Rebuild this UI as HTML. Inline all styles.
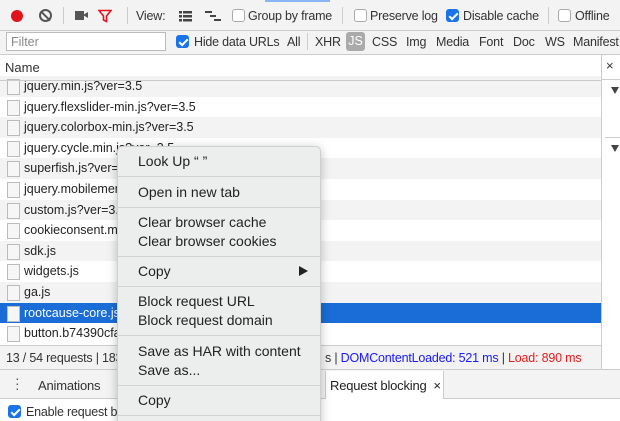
<!DOCTYPE html>
<html style="overflow:hidden;width:620px;height:421px"><head><style>
*{box-sizing:border-box;margin:0;padding:0}
body{width:620px;height:421px;overflow:hidden;background:#fff;font-family:"Liberation Sans",sans-serif;font-size:12.5px;color:#333;position:relative}
.abs{position:absolute;white-space:nowrap}
.cb{position:absolute;width:13px;height:13px;border:1px solid #aaa;border-radius:3px;background:#fff}
.cb.on{background:#1a73e8;border-color:#1a73e8}
.cb.on:after{content:"";position:absolute;left:3.5px;top:0.5px;width:3px;height:7px;border:solid #fff;border-width:0 2px 2px 0;transform:rotate(45deg)}
.t{font-size:12.5px;letter-spacing:-0.2px}
.row{position:absolute;left:0;width:601px;height:20.6px;line-height:20.6px;padding-left:24px;font-size:12.5px;color:#222;overflow:hidden;white-space:nowrap}
.row:before{content:"";position:absolute;left:7px;top:3px;width:11px;height:14px;border:1px solid #bbb;background:#f6f6f6}
.g{background:#f3f3f3}
.menu{position:absolute;left:117px;top:146px;width:204px;height:290px;background:#ebeeec;border:1px solid #cfcfcf;border-radius:5px;box-shadow:0 2px 10px rgba(0,0,0,.25);font-size:14px;color:#222}
.mi{position:absolute;left:20px;white-space:nowrap}
.sep{position:absolute;left:0;right:0;height:1px;background:#d2d2d2}
</style></head><body>
<!-- toolbar -->
<div class="abs" style="left:0;top:0;width:620px;height:31px;background:#f3f3f3;border-bottom:1px solid #ccc"></div>
<div class="abs" style="left:265px;top:0;width:65px;height:2px;background:#8ab4f8"></div>
<div class="abs" style="left:11px;top:10px;width:12px;height:12px;border-radius:50%;background:#e0151b"></div>
<div class="abs" style="left:39px;top:9px;width:13px;height:13px;border-radius:50%;border:2px solid #555"></div>
<div class="abs" style="left:39px;top:15px;width:13px;height:2px;background:#555;transform:rotate(45deg)"></div>
<div class="abs" style="left:63px;top:7px;width:1px;height:17px;background:#ccc"></div>
<div class="abs" style="left:75px;top:11px;width:9px;height:9px;background:#555"></div>
<div class="abs" style="left:83px;top:12px;border-right:5px solid #555;border-top:3.5px solid transparent;border-bottom:3.5px solid transparent"></div>
<svg class="abs" style="left:98px;top:9px" width="14" height="14"><path d="M1 1.5H13L8.5 7V12.5L5.5 11V7Z" fill="none" stroke="#e0151b" stroke-width="1.6"/></svg>
<div class="abs" style="left:127px;top:7px;width:1px;height:17px;background:#ccc"></div>
<div class="abs t" style="left:136px;top:9px">View:</div>
<svg class="abs" style="left:179px;top:11px" width="13" height="11"><rect x="0" y="0" width="3" height="2.5" fill="#444"/><rect x="4" y="0" width="9" height="2.5" fill="#444"/><rect x="0" y="4" width="3" height="2.5" fill="#444"/><rect x="4" y="4" width="9" height="2.5" fill="#444"/><rect x="0" y="8" width="3" height="2.5" fill="#444"/><rect x="4" y="8" width="9" height="2.5" fill="#444"/></svg>
<svg class="abs" style="left:205px;top:11px" width="16" height="11"><rect x="0" y="0" width="7" height="2" fill="#444"/><rect x="5" y="4" width="6" height="2" fill="#444"/><rect x="9" y="8" width="7" height="2" fill="#444"/></svg>
<div class="cb" style="left:232px;top:9px"></div>
<div class="abs t" style="left:248px;top:9px">Group by frame</div>
<div class="abs" style="left:342px;top:7px;width:1px;height:17px;background:#ccc"></div>
<div class="cb" style="left:354px;top:9px"></div>
<div class="abs t" style="left:370px;top:9px">Preserve log</div>
<div class="cb on" style="left:446px;top:9px"></div>
<div class="abs t" style="left:463px;top:9px">Disable cache</div>
<div class="abs" style="left:548px;top:7px;width:1px;height:17px;background:#ccc"></div>
<div class="cb" style="left:558px;top:9px"></div>
<div class="abs t" style="left:575px;top:9px">Offline</div>
<!-- filter row -->
<div class="abs" style="left:0;top:31px;width:620px;height:24px;background:#f3f3f3;border-bottom:1px solid #ccc"></div>
<div class="abs" style="left:6px;top:32px;width:160px;height:19px;background:#fff;border:1px solid #bbb;font-size:12.5px;color:#888;padding:2px 4px">Filter</div>
<div class="cb on" style="left:176px;top:35px"></div>
<div class="abs t" style="left:194px;top:35px">Hide data URLs</div>
<div class="abs t" style="left:287px;top:35px">All</div>
<div class="abs" style="left:307px;top:33px;width:1px;height:17px;background:#ccc"></div>
<div class="abs t" style="left:315px;top:35px">XHR</div>
<div class="abs" style="left:346px;top:32px;width:19px;height:19px;background:#aaa;border-radius:3px;color:#fff;text-align:center;line-height:19px;font-size:12.5px">JS</div>
<div class="abs t" style="left:372px;top:35px">CSS</div>
<div class="abs t" style="left:406px;top:35px">Img</div>
<div class="abs t" style="left:436px;top:35px">Media</div>
<div class="abs t" style="left:479px;top:35px">Font</div>
<div class="abs t" style="left:513px;top:35px">Doc</div>
<div class="abs t" style="left:545px;top:35px">WS</div>
<div class="abs t" style="left:573px;top:35px">Manifest</div>
<!-- header -->
<div class="abs" style="left:0;top:55px;width:620px;height:25px;border-bottom:1px solid #ccc;background:#fff"></div>
<div class="abs" style="left:5px;top:60px;font-size:13px">Name</div>
<div class="abs" style="left:601px;top:55px;width:1px;height:314px;background:#ccc"></div>
<div class="abs" style="left:606px;top:58px;font-size:13px">×</div>
<div class="abs" style="left:611px;top:87px;border-top:7px solid #444;border-left:4px solid transparent;border-right:4px solid transparent"></div>
<div class="abs" style="left:605px;top:137px;width:15px;height:1px;background:#ccc"></div>
<div class="abs" style="left:611px;top:145px;border-top:7px solid #444;border-left:4px solid transparent;border-right:4px solid transparent"></div>
<!-- rows -->
<div style="position:absolute;left:0;top:76px;width:601px;height:269px;overflow:hidden">
<div class="row g" style="top:0;">jquery.min.js?ver=3.5</div>
<div class="row" style="top:20.6px">jquery.flexslider-min.js?ver=3.5</div>
<div class="row g" style="top:41.2px">jquery.colorbox-min.js?ver=3.5</div>
<div class="row" style="top:61.8px">jquery.cycle.min.js?ver=3.5</div>
<div class="row g" style="top:82.4px">superfish.js?ver=3.5</div>
<div class="row" style="top:103px">jquery.mobilemenu.js</div>
<div class="row g" style="top:123.6px">custom.js?ver=3.5</div>
<div class="row" style="top:144.2px">cookieconsent.min.js</div>
<div class="row g" style="top:164.8px">sdk.js</div>
<div class="row" style="top:185.4px">widgets.js</div>
<div class="row g" style="top:206px">ga.js</div>
<div class="row" style="top:226.6px;background:#1a6dd6;color:#fff">rootcause-core.js</div>
<div class="row" style="top:247.2px">button.b74390cfa</div>
</div>
<div class="abs" style="left:0;top:80px;width:601px;height:1px;background:#ccc"></div>
<!-- status -->
<div class="abs" style="left:0;top:345px;width:601px;height:24px;background:#f3f3f3;border-top:1px solid #ccc"></div>
<div class="abs t" style="left:6px;top:351px">13 / 54 requests | 183</div>
<div class="abs t" style="left:325px;top:351px">s | <span style="color:#1a1aff">DOMContentLoaded: 521 ms</span> | <span style="color:#e81c1c">Load: 890 ms</span></div>
<!-- bottom tabs -->
<div class="abs" style="left:0;top:369px;width:620px;height:30px;background:#f3f3f3;border-top:1px solid #ccc;border-bottom:1px solid #ccc"></div>
<div class="abs" style="left:15px;top:376px;font-size:14px;line-height:5px;color:#555">·<br>·<br>·</div>
<div class="abs t" style="left:38px;top:378px;font-size:13px">Animations</div>
<div class="abs" style="left:325px;top:371px;width:119px;height:28px;background:#fff;border-left:1px solid #ccc;border-right:1px solid #ccc"></div>
<div class="abs t" style="left:330px;top:378px;font-size:13px;color:#222">Request blocking&nbsp; ×</div>
<div class="cb on" style="left:8px;top:405px"></div>
<div class="abs t" style="left:26px;top:405px">Enable request bl</div>
<!-- menu -->
<div class="menu">
<div class="mi" style="top:6px">Look Up “ ”</div>
<div class="sep" style="top:29px"></div>
<div class="mi" style="top:37px">Open in new tab</div>
<div class="sep" style="top:60px"></div>
<div class="mi" style="top:67px">Clear browser cache</div>
<div class="mi" style="top:86px">Clear browser cookies</div>
<div class="sep" style="top:109px"></div>
<div class="mi" style="top:116px">Copy</div>
<div class="abs" style="right:12px;top:119px;border-left:9px solid #222;border-top:5px solid transparent;border-bottom:5px solid transparent"></div>
<div class="sep" style="top:139px"></div>
<div class="mi" style="top:146px">Block request URL</div>
<div class="mi" style="top:165px">Block request domain</div>
<div class="sep" style="top:188px"></div>
<div class="mi" style="top:196px">Save as HAR with content</div>
<div class="mi" style="top:215px">Save as...</div>
<div class="sep" style="top:238px"></div>
<div class="mi" style="top:245px">Copy</div>
<div class="sep" style="top:268px"></div>
</div>
</body></html>
